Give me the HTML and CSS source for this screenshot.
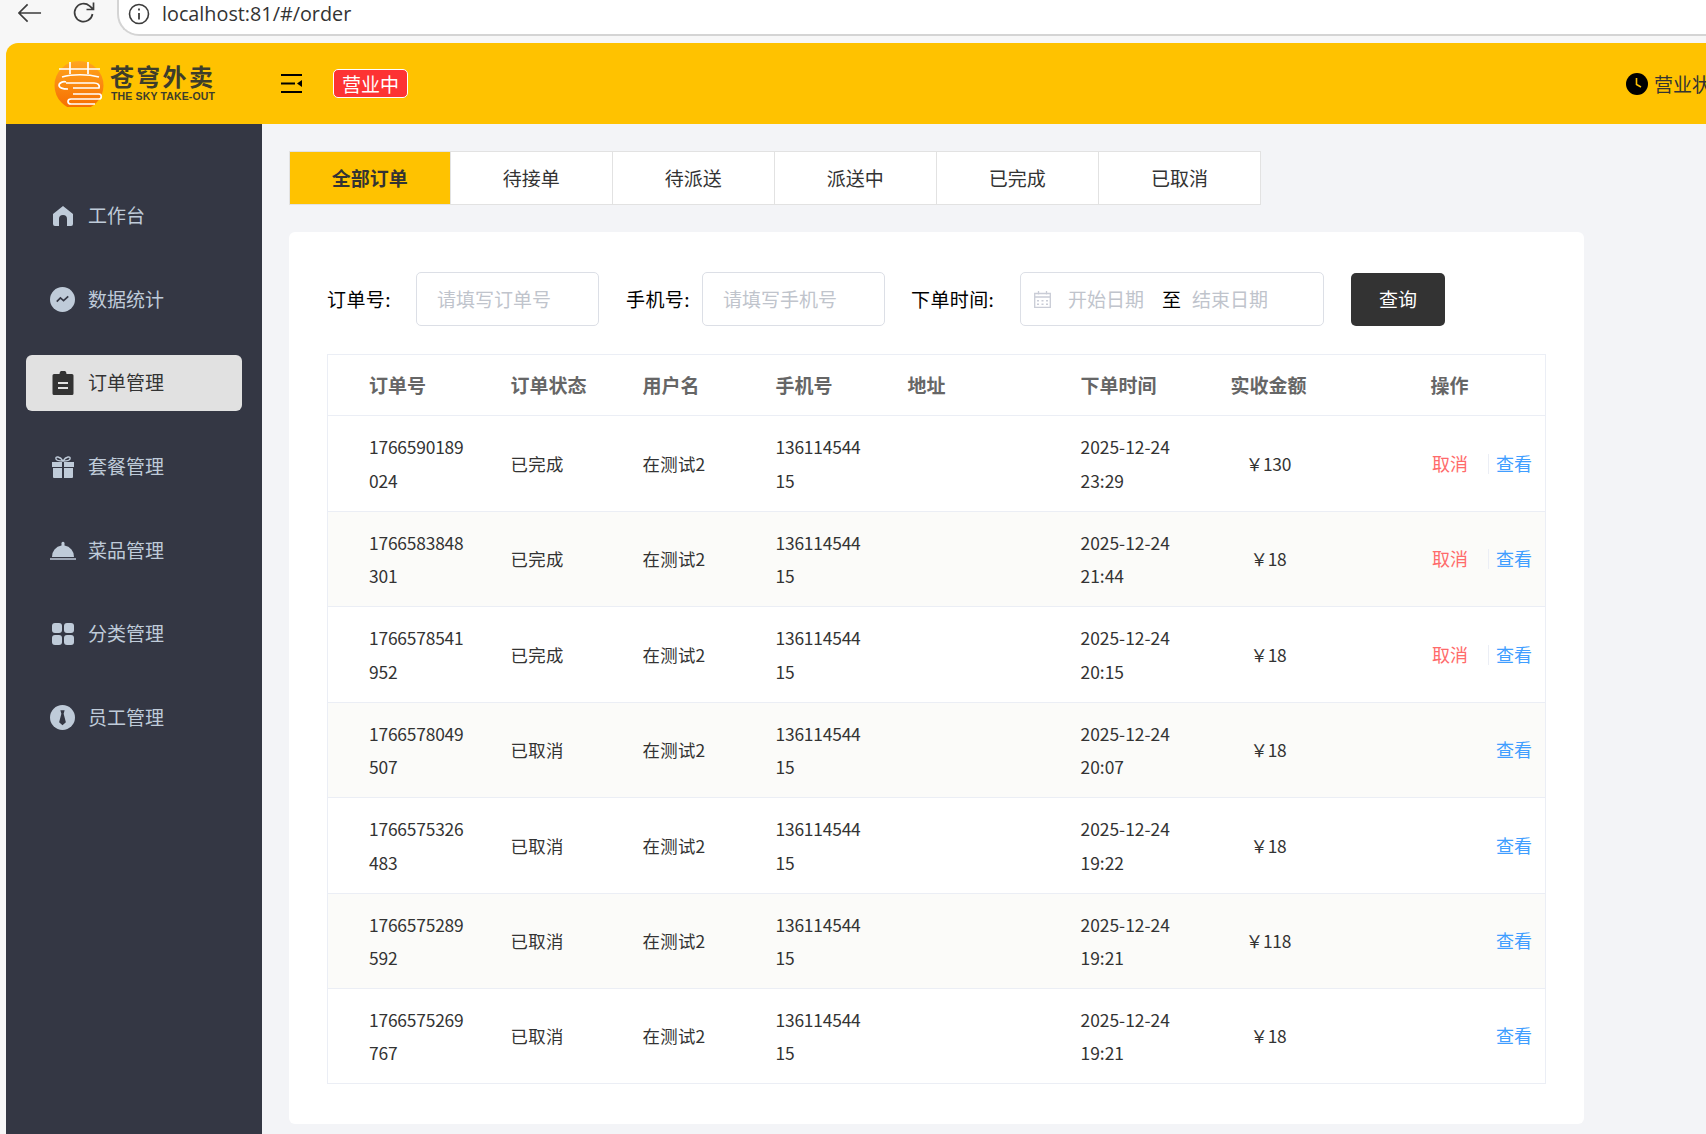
FILE: index.html
```html
<!DOCTYPE html>
<html lang="zh-CN">
<head>
<meta charset="utf-8">
<title>苍穹外卖</title>
<link rel="stylesheet" href="styles.css">
</head>
<body>
<div class="browser-bar">
  <svg class="chrome-back" viewBox="1 0 25 22"><path d="M25 11H2M11 2 2 11l9 9" fill="none" stroke="#3c3c3c" stroke-width="1.7"/></svg>
  <svg class="chrome-reload" viewBox="0 0 24 24"><path d="M20.5 13a9 9 0 1 1-3-8.2L21 8M21.500 1.500V8.500H14.500" fill="none" stroke="#3c3c3c" stroke-width="1.7"/></svg>
  <div class="url-bar">
    <svg class="chrome-info" viewBox="0 0 22 22"><circle cx="11" cy="11" r="9.500" fill="none" stroke="#3c3c3c" stroke-width="1.600"/><path d="M11 10v6.500M11 5.500v2" stroke="#3c3c3c" stroke-width="1.800"/></svg>
    <span class="url-text">localhost:81/#/order</span>
  </div>
</div>
<div class="app">
  <header class="topbar">
    <div class="logo">
      <svg class="logo-mark" viewBox="0 0 50 46">
        <defs><linearGradient id="logoFill" x1="0" y1="0" x2="0" y2="1"><stop offset="0" stop-color="#ffa51f"/><stop offset="1" stop-color="#f66b00"/></linearGradient></defs>
        <circle cx="25" cy="24.500" r="24.500" fill="url(#logoFill)"/>
        <path d="M5 8h41M16 1v12M34 1v12M8 16c10-3 26-3 37 0M12 22h28c4 0 6 2 5 5H19M14 28c-5 0-9-1-9-4 0-2 4-4 7-3M19 33h26c3 0 3 5 0 5H17c-4 0-4 5 0 5h24" fill="none" stroke="#fff" stroke-width="1.700"/>
      </svg>
      <div class="logo-words">
        <div class="logo-cn">苍穹外卖</div>
        <div class="logo-en">THE SKY TAKE-OUT</div>
      </div>
    </div>
    <svg class="menu-toggle" viewBox="0 0 21 19"><path d="M0 1h21M0 9.500h14M0 18h21" stroke="#000" stroke-width="2"/><path d="M21 6v7l-5-3.500z" fill="#000"/></svg>
    <span class="status-badge">营业中</span>
    <div class="shop-status">
      <svg class="clock" viewBox="0 0 22 22"><circle cx="11" cy="11" r="11" fill="#000"/><path d="M10.500 5v6.500l4.500 2.500" fill="none" stroke="#ffc200" stroke-width="1.600"/></svg>
      <span class="shop-status-text">营业状态设置</span>
    </div>
  </header>
  <div class="main">
    <nav class="sidebar">
      <a class="nav-item">
        <svg class="nav-icon" viewBox="0 0 22 22"><path d="M11 1 21 9v10a2 2 0 0 1-2 2h-4v-7a4 4 0 0 0-8 0v7H3a2 2 0 0 1-2-2V9z" fill="currentColor"/></svg>
        <span>工作台</span>
      </a>
      <a class="nav-item">
        <svg class="nav-icon nav-icon-round" viewBox="0 0 24 24"><circle cx="12" cy="12" r="12" fill="currentColor"/><path d="m6.500 14 3.500-3.500 3 2.500 4.500-4" fill="none" stroke="#343744" stroke-width="1.600"/></svg>
        <span>数据统计</span>
      </a>
      <a class="nav-item active">
        <svg class="nav-icon nav-icon-clip" viewBox="0 0 22 24"><path d="M2 3h5.500a3.500 3.500 0 0 1 7 0H20a1.500 1.500 0 0 1 1.500 1.500v18A1.500 1.500 0 0 1 20 24H2a1.500 1.500 0 0 1-1.500-1.500v-18A1.500 1.500 0 0 1 2 3z" fill="#333"/><path d="M6 12h10M6 17h10" stroke="#e1e1e1" stroke-width="2"/></svg>
        <span>订单管理</span>
      </a>
      <a class="nav-item">
        <svg class="nav-icon" viewBox="0 0 22 22"><path d="M11 5C8 0 3 0 4 3c.5 1.500 4 2 7 2 3 0 6.500-.5 7-2 1-3-4-3-7 2z" fill="none" stroke="currentColor" stroke-width="1.400"/><path d="M0 6h10v5H0zM12 6h10v5H12zM1 12h9v10H2a1 1 0 0 1-1-1zM12 12h9v9a1 1 0 0 1-1 1h-8z" fill="currentColor"/></svg>
        <span>套餐管理</span>
      </a>
      <a class="nav-item">
        <svg class="nav-icon nav-icon-wide" viewBox="0 0 26 22"><path d="M2 18a11 11 0 0 1 9.500-11.500V5a1.600 1.600 0 1 1 3 0v1.500A11 11 0 0 1 24 18z" fill="currentColor"/><path d="M0 19h26v2H0z" fill="currentColor" opacity=".75"/></svg>
        <span>菜品管理</span>
      </a>
      <a class="nav-item">
        <svg class="nav-icon" viewBox="0 0 22 22"><rect x="0" y="0" width="10" height="10" rx="3" fill="currentColor"/><rect x="12" y="0" width="10" height="10" rx="3" fill="currentColor"/><rect x="0" y="12" width="10" height="10" rx="3" fill="currentColor"/><rect x="12" y="12" width="10" height="10" rx="3" fill="currentColor"/></svg>
        <span>分类管理</span>
      </a>
      <a class="nav-item">
        <svg class="nav-icon nav-icon-round" viewBox="0 0 26 26"><circle cx="13" cy="13" r="13" fill="currentColor"/><path d="M10.800 5.500h4.400l-1 3.500 2.300 9-3.500 3-3.500-3 2.300-9z" fill="#343744"/></svg>
        <span>员工管理</span>
      </a>
    </nav>
    <main class="content">
      <div class="tabs">
        <div class="tab tab-active">全部订单</div>
        <div class="tab">待接单</div>
        <div class="tab">待派送</div>
        <div class="tab">派送中</div>
        <div class="tab">已完成</div>
        <div class="tab">已取消</div>
      </div>
      <section class="card">
        <form class="filters">
          <label class="filter-label">订单号:</label>
          <input class="text-input" placeholder="请填写订单号">
          <label class="filter-label label-phone">手机号:</label>
          <input class="text-input" placeholder="请填写手机号">
          <label class="filter-label label-time">下单时间:</label>
          <div class="date-range">
            <svg class="date-icon" viewBox="0 0 17 17"><path d="M.7 2.500h15.600v14H.7zM.7 6h15.600M4.500 0v3.500M12.500 0v3.500" fill="none" stroke="#c9ccd6" stroke-width="1.300"/><path d="M3 9h2v1.500H3zM7.500 9h2v1.500h-2zM12 9h2v1.500h-2zM3 12.500h2V14H3zM7.500 12.500h2V14h-2zM12 12.500h2V14h-2z" fill="#c9ccd6"/></svg>
            <input class="date-input" placeholder="开始日期">
            <span class="date-sep">至</span>
            <input class="date-input" placeholder="结束日期">
          </div>
          <button class="search-btn" type="button">查询</button>
        </form>
        <table class="orders">
          <colgroup>
            <col class="col-no"><col class="col-status"><col class="col-user"><col class="col-phone"><col class="col-addr"><col class="col-time"><col class="col-amount"><col class="col-op">
          </colgroup>
          <thead>
            <tr>
              <th class="cell-first">订单号</th><th>订单状态</th><th>用户名</th><th>手机号</th><th>地址</th><th>下单时间</th><th class="cell-center">实收金额</th><th class="cell-op-head">操作</th>
            </tr>
          </thead>
          <tbody>
            <tr>
              <td class="cell-first">1766590189<br>024</td><td class="cell-text">已完成</td><td class="cell-text">在测试2</td><td>136114544<br>15</td><td></td><td class="cell-time">2025-12-24<br>23:29</td><td class="cell-center">￥130</td>
              <td><div class="ops"><a class="op-cancel">取消</a><i class="op-divider"></i><a class="op-view">查看</a></div></td>
            </tr>
            <tr>
              <td class="cell-first">1766583848<br>301</td><td class="cell-text">已完成</td><td class="cell-text">在测试2</td><td>136114544<br>15</td><td></td><td class="cell-time">2025-12-24<br>21:44</td><td class="cell-center">￥18</td>
              <td><div class="ops"><a class="op-cancel">取消</a><i class="op-divider"></i><a class="op-view">查看</a></div></td>
            </tr>
            <tr>
              <td class="cell-first">1766578541<br>952</td><td class="cell-text">已完成</td><td class="cell-text">在测试2</td><td>136114544<br>15</td><td></td><td class="cell-time">2025-12-24<br>20:15</td><td class="cell-center">￥18</td>
              <td><div class="ops"><a class="op-cancel">取消</a><i class="op-divider"></i><a class="op-view">查看</a></div></td>
            </tr>
            <tr>
              <td class="cell-first">1766578049<br>507</td><td class="cell-text">已取消</td><td class="cell-text">在测试2</td><td>136114544<br>15</td><td></td><td class="cell-time">2025-12-24<br>20:07</td><td class="cell-center">￥18</td>
              <td><div class="ops"><a class="op-view">查看</a></div></td>
            </tr>
            <tr>
              <td class="cell-first">1766575326<br>483</td><td class="cell-text">已取消</td><td class="cell-text">在测试2</td><td>136114544<br>15</td><td></td><td class="cell-time">2025-12-24<br>19:22</td><td class="cell-center">￥18</td>
              <td><div class="ops"><a class="op-view">查看</a></div></td>
            </tr>
            <tr>
              <td class="cell-first">1766575289<br>592</td><td class="cell-text">已取消</td><td class="cell-text">在测试2</td><td>136114544<br>15</td><td></td><td class="cell-time">2025-12-24<br>19:21</td><td class="cell-center">￥118</td>
              <td><div class="ops"><a class="op-view">查看</a></div></td>
            </tr>
            <tr>
              <td class="cell-first">1766575269<br>767</td><td class="cell-text">已取消</td><td class="cell-text">在测试2</td><td>136114544<br>15</td><td></td><td class="cell-time">2025-12-24<br>19:21</td><td class="cell-center">￥18</td>
              <td><div class="ops"><a class="op-view">查看</a></div></td>
            </tr>
          </tbody>
        </table>
      </section>
    </main>
  </div>
</div>
</body>
</html>
```
FILE: styles.css
```css
* { box-sizing: border-box; }
html, body { margin: 0; height: 100%; }
body {
  width: 1706px;
  height: 1134px;
  overflow: hidden;
  background: #f7f7f7;
  font-family: "Noto Sans CJK SC", "Noto Sans", sans-serif;
  color: #333;
}

/* browser chrome */
.browser-bar {
  height: 43px;
  display: flex;
  align-items: flex-start;
  padding-left: 18px;
}
.chrome-back { width: 24px; height: 22px; margin-top: 2px; flex: none; }
.chrome-reload { width: 24px; height: 24px; margin: 1px 0 0 30px; flex: none; }
.url-bar {
  flex: 1;
  height: 36px;
  margin-left: 21px;
  padding-left: 9px;
  display: flex;
  align-items: center;
  gap: 12px;
  background: #fff;
  border: 2px solid #d4d4d4;
  border-width: 0 0 2px 2px;
  border-bottom-left-radius: 22px;
}
.chrome-info { width: 22px; height: 22px; flex: none; margin-top: -6px; }
.url-text {
  font-family: "Open Sans", "Noto Sans", sans-serif;
  font-size: 19.800px;
  line-height: 28px;
  color: #333;
  margin-top: -6px;
}

/* app shell */
.app {
  margin-left: 6px;
  height: 1091px;
  display: flex;
  flex-direction: column;
  border-top-left-radius: 12px;
  overflow: hidden;
}
.topbar {
  height: 81px;
  flex: none;
  background: #ffc200;
  display: flex;
  align-items: center;
  position: relative;
  padding-left: 48px;
}
.logo { display: flex; align-items: center; width: 227px; }
.logo-mark { width: 50px; height: 46px; flex: none; }
.logo-words { margin-left: 6px; width: 107px; }
.logo-cn {
  font-size: 24px;
  line-height: 22px;
  font-weight: 700;
  letter-spacing: 2.300px;
  color: #3d3d2b;
  white-space: nowrap;
}
.logo-en {
  margin: 3px 0 0 1px;
  font-family: "Liberation Sans", sans-serif;
  font-size: 10.500px;
  line-height: 12px;
  font-weight: 700;
  letter-spacing: .15px;
  color: #3d3d2b;
  white-space: nowrap;
}
.menu-toggle { width: 21px; height: 19px; flex: none; }
.status-badge {
  margin-left: 31px;
  width: 75px;
  height: 29px;
  display: flex;
  align-items: center;
  justify-content: center;
  background: #fd3333;
  border: 1px solid #fff;
  border-radius: 5px;
  color: #fff;
  font-size: 19px;
  line-height: 1;
}
.shop-status {
  position: absolute;
  left: 1620px;
  top: 29px;
  display: flex;
  align-items: center;
  gap: 6px;
  white-space: nowrap;
}
.clock { width: 22px; height: 22px; flex: none; }
.shop-status-text { font-size: 19px; line-height: 24px; color: #333; }

.main { flex: 1; display: flex; min-height: 0; }

/* sidebar */
.sidebar {
  width: 256px;
  flex: none;
  background: #343744;
  padding: 63.500px 20px 0;
  display: flex;
  flex-direction: column;
  gap: 27.700px;
}
.nav-item {
  height: 56px;
  display: flex;
  align-items: center;
  padding-left: 26px;
  border-radius: 6px;
  color: #bfcbd9;
  font-size: 19px;
  line-height: 1;
}
.nav-item span { margin-left: 14px; margin-top: -2px; }
.nav-icon { width: 22px; height: 22px; flex: none; color: #bfcbd9; }
.nav-icon-wide { width: 26px; margin-left: -2px; }
.nav-item .nav-icon-wide + span { margin-left: 12px; }
.nav-icon-round { width: 25px; height: 25px; margin-left: -2px; }
.nav-item .nav-icon-round + span { margin-left: 13px; }
.nav-icon-clip { height: 24px; }
.nav-item.active { background: #e1e1e1; color: #333; }

/* content */
.content {
  flex: 1;
  min-width: 0;
  background: #f3f4f7;
  padding: 27px 122px 0 27px;
}
.tabs { display: flex; width: 972px; height: 54px; margin-bottom: 27px; }
.tab {
  flex: 1 1 0;
  display: flex;
  align-items: center;
  justify-content: center;
  padding-bottom: 2px;
  background: #fff;
  border: 1px solid #e2e2e2;
  border-left-width: 0;
  font-size: 19px;
  line-height: 1;
  color: #333;
}
.tab:first-child { border-left-width: 1px; }
.tab-active { flex: 0 0 161.600px; background: #ffc200; font-weight: 700; }

.card {
  background: #fff;
  border-radius: 6px;
  padding: 40px 39px 40px 38px;
}

/* filters */
.filters {
  display: flex;
  align-items: center;
  height: 54px;
  margin-bottom: 28px;
}
.filter-label { width: 89px; flex: none; font-size: 19px; line-height: 1; letter-spacing: .4px; color: #000; white-space: nowrap; margin-top: -2px; }
.label-phone { width: 76px; margin-left: 27px; }
.label-time { width: 109px; margin-left: 26px; }
.text-input {
  width: 183px;
  height: 54px;
  flex: none;
  padding: 0 20px 2px;
  border: 1px solid #dcdfe6;
  border-radius: 5px;
  font: inherit;
  font-size: 19px;
  color: #333;
  outline: none;
}
input::placeholder { color: #c0c4cc; opacity: 1; }
.date-range {
  width: 304px;
  height: 54px;
  flex: none;
  display: flex;
  align-items: center;
  padding-left: 13px;
  border: 1px solid #dcdfe6;
  border-radius: 5px;
}
.date-icon { width: 17px; height: 17px; flex: none; }
.date-input {
  width: 78px;
  flex: none;
  padding: 0 0 2px;
  border: 0;
  font: inherit;
  font-size: 19px;
  outline: none;
}
.date-icon + .date-input { margin-left: 17px; }
.date-sep { width: 46px; flex: none; padding-left: 16px; font-size: 19px; line-height: 1; color: #000; margin-top: -1px; }
.search-btn {
  width: 94px;
  height: 53px;
  flex: none;
  margin: 1px 0 0 27px;
  padding-bottom: 3px;
  background: #333;
  border: 0;
  border-radius: 5px;
  color: #fff;
  font: inherit;
  font-size: 19px;
}

/* table */
.orders {
  width: 100%;
  table-layout: fixed;
  border-collapse: collapse;
  border: 1px solid #ebeef5;
}
.col-no { width: 173px; }
.col-status { width: 132px; }
.col-user { width: 133px; }
.col-phone { width: 132px; }
.col-addr { width: 173px; }
.col-time { width: 120px; }
.col-amount { width: 156px; }
.col-op { width: 199px; }
.orders th, .orders td { padding: 0 10px; text-align: left; border-bottom: 1px solid #ebeef5; }
.orders th {
  height: 61px;
  padding-bottom: 2px;
  font-size: 19px;
  line-height: 1;
  font-weight: 700;
  color: #666;
}
.orders td {
  height: 96px;
  font-size: 17.400px;
  line-height: 33.500px;
  letter-spacing: -.2px;
  color: #333;
}
.orders tbody tr:nth-child(even) { background: #fbfbf9; }
.orders tbody tr:nth-child(even) td,
.orders tbody tr:last-child td { height: 95px; }
.orders .cell-first { padding-left: 41px; }
.orders .cell-text { letter-spacing: .3px; }
.orders .cell-time { letter-spacing: 0; }
.orders .cell-center { text-align: center; }
.orders .cell-op-head { padding-left: 84px; }
.ops { display: flex; align-items: center; justify-content: flex-end; padding-right: 3px; font-size: 18px; letter-spacing: 0; }
.op-cancel { color: #ff6b6b; }
.op-view { color: #409eff; }
.op-divider { width: 1px; height: 20px; margin: 0 7px 0 20px; background: #ebeef5; }
```
